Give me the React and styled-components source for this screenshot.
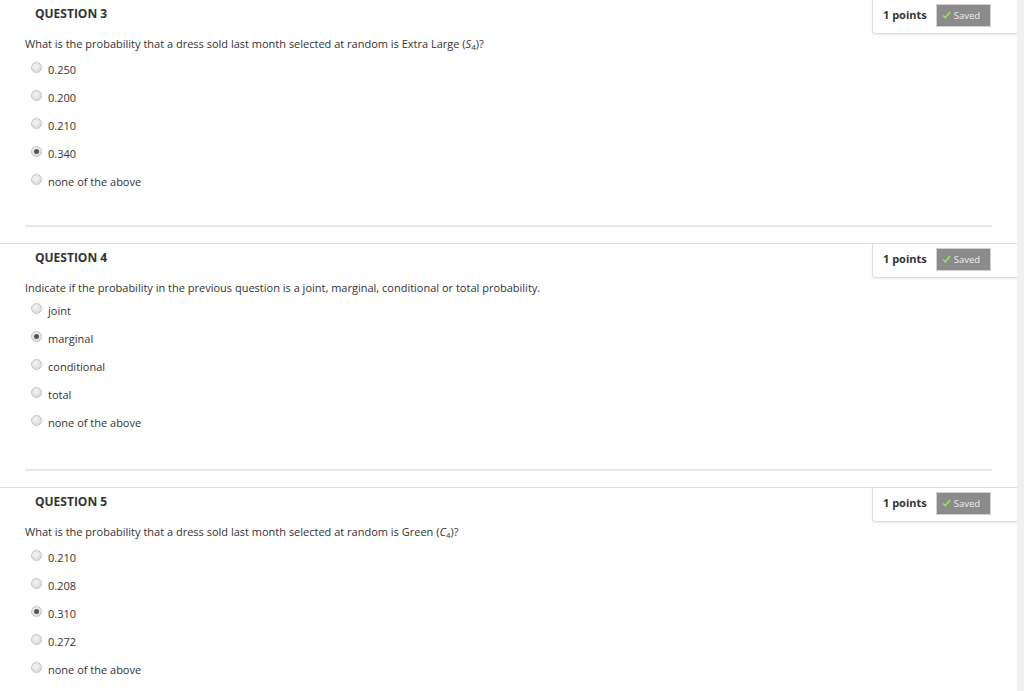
import React from "react";
import styled, { createGlobalStyle } from "styled-components";

const Global = createGlobalStyle`
  html, body {
    margin: 0;
    padding: 0;
    background: #fff;
    font-family: "Open Sans", "Liberation Sans", sans-serif;
    color: #333;
  }
`;

const Page = styled.div`
  width: 1024px;
  height: 691px;
  overflow: hidden;
  display: flex;
`;

const Main = styled.div`
  width: 1017px;
  display: flex;
  flex-direction: column;
  margin-top: -1px;
`;

const Gutter = styled.div`
  flex: 1;
  background: #f0f0f0;
`;

const Block = styled.div`
  height: 244px;
  flex-shrink: 0;
  box-sizing: border-box;
  border-top: 1px solid #dcdcdc;
  display: flex;
  flex-direction: column;
`;

const Head = styled.div`
  display: flex;
  justify-content: space-between;
  align-items: flex-start;
  height: 34px;
`;

const Title = styled.h3`
  margin: 0;
  padding: 6px 0 0 35px;
  font-size: 12px;
  line-height: 16px;
  font-weight: 700;
  color: #333;
`;

const PointsBox = styled.div`
  width: 145px;
  height: 34px;
  box-sizing: border-box;
  border-left: 1px solid #ddd;
  border-bottom: 1px solid #ddd;
  border-bottom-left-radius: 4px;
  box-shadow: 0 1px 2px rgba(0, 0, 0, 0.08);
  display: flex;
  align-items: center;
  padding: 0 0 3px 10px;
  gap: 9px;
`;

const Points = styled.span`
  font-size: 11px;
  font-weight: 700;
  color: #333;
  margin-top: -2px;
`;

const Saved = styled.span`
  width: 55px;
  height: 23px;
  box-sizing: border-box;
  background: #8b8b8b;
  border: 1px solid #d0d0d0;
  color: #eee;
  font-size: 9.5px;
  display: flex;
  align-items: center;
  padding-left: 5px;
  gap: 3px;
`;

const Prompt = styled.p`
  margin: 2px 0 0 25px;
  font-size: 11px;
  line-height: 16px;
  color: #333;
`;

const Options = styled.div`
  display: flex;
  flex-direction: column;
  margin-top: 7px;
`;

const Option = styled.label`
  height: 28px;
  display: flex;
  align-items: center;
  padding-left: 31px;
  gap: 6px;
  font-size: 11px;
  color: #333;
  margin-top: ${(p) => (p.first ? "-7px" : "0")};
`;

const Radio = styled.span`
  width: 11px;
  height: 11px;
  box-sizing: border-box;
  border-radius: 50%;
  border: 1px solid #c4c4c4;
  background: radial-gradient(circle at 40% 35%, #f4f4f4, #d4d4d4);
  display: flex;
  align-items: center;
  justify-content: center;
  margin-top: -3px;

  &::after {
    content: "";
    width: 5px;
    height: 5px;
    border-radius: 50%;
    background: ${(p) => (p.checked ? "#555" : "transparent")};
  }
`;

const Rule = styled.div`
  margin: auto 25px 16px 25px;
  height: 2px;
  background: #e6e6e6;
`;

const Sub = styled.sub`
  font-size: 8px;
  vertical-align: -2px;
`;

const Check = () => (
  <svg width="9" height="8" viewBox="0 0 9 8">
    <path d="M1 4.5 L3.3 6.8 L8 1" fill="none" stroke="#9be05a" strokeWidth="1.6" />
  </svg>
);

const questions = [
  {
    n: 3,
    text: (
      <>
        What is the probability that a dress sold last month selected at random is Extra Large (
        <i>S</i>
        <Sub>4</Sub>)?
      </>
    ),
    options: ["0.250", "0.200", "0.210", "0.340", "none of the above"],
    checked: 3,
  },
  {
    n: 4,
    text: "Indicate if the probability in the previous question is a joint, marginal, conditional or total probability.",
    options: ["joint", "marginal", "conditional", "total", "none of the above"],
    checked: 1,
  },
  {
    n: 5,
    text: (
      <>
        What is the probability that a dress sold last month selected at random is Green (<i>C</i>
        <Sub>4</Sub>)?
      </>
    ),
    options: ["0.210", "0.208", "0.310", "0.272", "none of the above"],
    checked: 2,
  },
];

export default function App() {
  return (
    <Page>
      <Global />
      <Main>
        {questions.map((q) => (
          <Block key={q.n}>
            <Head>
              <Title>QUESTION {q.n}</Title>
              <PointsBox>
                <Points>1 points</Points>
                <Saved>
                  <Check />
                  Saved
                </Saved>
              </PointsBox>
            </Head>
            <Prompt>{q.text}</Prompt>
            <Options>
              {q.options.map((o, i) => (
                <Option key={o} first={i === 0}>
                  <Radio checked={i === q.checked} />
                  {o}
                </Option>
              ))}
            </Options>
            <Rule />
          </Block>
        ))}
      </Main>
      <Gutter />
    </Page>
  );
}
